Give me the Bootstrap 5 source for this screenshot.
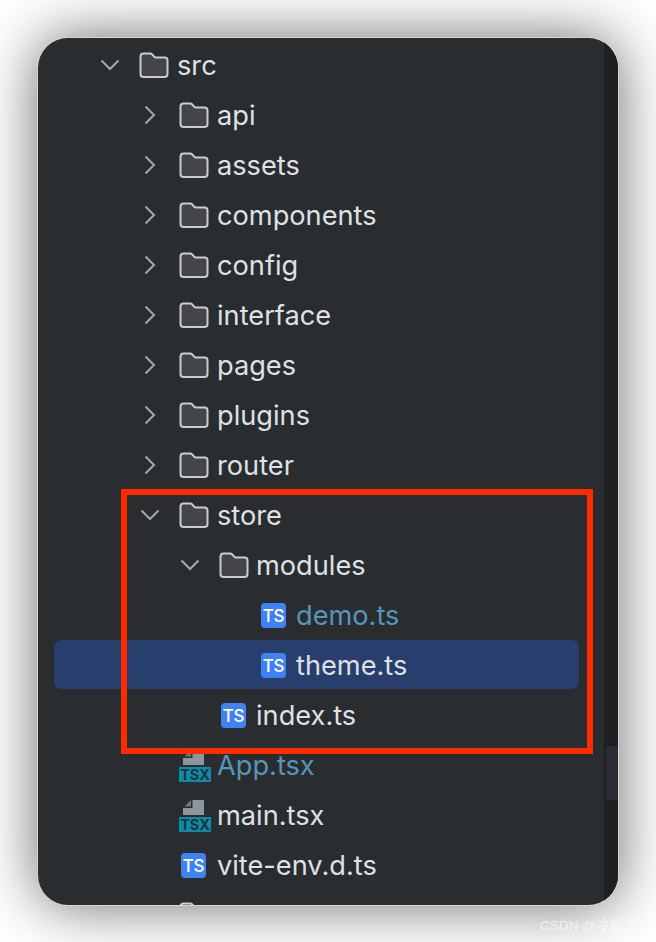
<!DOCTYPE html>
<html lang="en">
<head>
    <meta charset="UTF-8">
    <title>Project tree</title>
    <link href="https://cdn.jsdelivr.net/npm/bootstrap@5.3.2/dist/css/bootstrap.min.css" rel="stylesheet">
    <style>
        body {
            background: #fff;
            margin: 0;
            height: 942px;
            overflow: hidden;
            padding: 38px 38px 0;
            font-family: Inter, "Liberation Sans", sans-serif;
        }
        .ide-window {
            width: 580px;
            height: 867px;
            background: #2a2d30;
            border-radius: 30px;
            box-shadow: 0 0 0 1px #d4d4d4, 0 0 60px rgba(0, 0, 0, .6);
            overflow: hidden;
        }
        .tree-pane { padding-top: 2px; }
        .scroll-strip { width: 14px; background: #1e1f22; padding-top: 708px; }
        .scroll-thumb { height: 54px; margin-left: 2px; background: #2a2c34; }
        .tree-row {
            height: 50px;
            font-size: 27.2px;
            color: #dfe1e5;
            white-space: nowrap;
        }
        .tree-row > span { padding-top: 2px; }
        .tree-row.picked { position: relative; z-index: 0; }
        .tree-row.picked::before {
            content: "";
            position: absolute;
            z-index: -1;
            left: 16px;
            width: 525px;
            top: 0;
            height: 49px;
            background: #283f6e;
            border-radius: 8px;
        }
        .lv0 { padding-left: 61px; }
        .lv1 { padding-left: 101px; }
        .lv2 { padding-left: 141px; }
        .lv3 { padding-left: 181px; }
        .lv2 > span, .lv3 > span { margin-left: -1px; }
        .arrow-slot { width: 40px; flex: none; }
        .arrow-slot svg { display: block; width: 22px; height: 22px; }
        .icon-slot { width: 38px; flex: none; }
        .icon-slot svg { display: block; }
        .ts-icon {
            width: 25px;
            height: 25px;
            margin-left: 2px;
            background: #3f82f5;
            border-radius: 4px;
            color: #fff;
            font-size: 17px;
            font-weight: 500;
            line-height: 27px;
            text-align: center;
            letter-spacing: -.2px;
        }
        .tsx-icon { width: 32px; margin-top: 2px; }
        .tsx-icon svg { display: block; margin: 0 0 2px 4px; }
        .tsx-bar {
            height: 15px;
            background: #0e8ba6;
            color: #1d3540;
            font-size: 14.5px;
            font-weight: 700;
            line-height: 15px;
            text-align: center;
        }
        .changed { color: #5596bb; }
        .red-frame {
            position: absolute;
            left: 121px;
            top: 489px;
            width: 472px;
            height: 265px;
            border: 6px solid #ff2a00;
            z-index: 5;
        }
        .wm-text {
            position: absolute;
            left: 540px;
            top: 916px;
            font-family: "Liberation Sans", "Noto Sans CJK SC", sans-serif;
            font-size: 13.5px;
            color: rgba(255, 255, 255, .6);
            white-space: nowrap;
        }
    </style>
</head>
<body>
    <svg width="0" height="0" class="position-absolute">
        <symbol id="folder" viewBox="0 0 30 26">
            <path d="M4.500 1.500h6.600c1 0 1.700.4 2.300 1.100l1.700 2.100c.4.5.9.7 1.500.7h8.900c1.900 0 3 1.100 3 3v13.600c0 1.900-1.100 3-3 3H4.500c-1.900 0-3-1.100-3-3V4.500c0-1.900 1.100-3 3-3z" fill="#43454a" stroke="#c9ccd1" stroke-width="2"/>
        </symbol>
        <symbol id="right" viewBox="0 0 22 22">
            <path d="M6.500 2.500 15 11l-8.500 8.500" fill="none" stroke="#a3a6ab" stroke-width="2"/>
        </symbol>
        <symbol id="down" viewBox="0 0 22 22">
            <path d="M2.500 6.500 11 15l8.500-8.500" fill="none" stroke="#a3a6ab" stroke-width="2"/>
        </symbol>
        <symbol id="tsxdoc" viewBox="0 0 22 15">
            <path d="M9.500 0H21v15H0V8h9.500z" fill="#8d969e"/>
            <path d="M1.500 6.500 8 0v6.500z" fill="#6f777e"/>
        </symbol>
    </svg>

    <div class="ide-window d-flex">
        <div class="tree-pane flex-grow-1">
            <div class="tree-row lv0 d-flex align-items-center">
                <div class="arrow-slot"><svg><use href="#down"/></svg></div>
                <div class="icon-slot"><svg width="30" height="26"><use href="#folder"/></svg></div>
                <span>src</span>
            </div>
            <div class="tree-row lv1 d-flex align-items-center">
                <div class="arrow-slot"><svg><use href="#right"/></svg></div>
                <div class="icon-slot"><svg width="30" height="26"><use href="#folder"/></svg></div>
                <span>api</span>
            </div>
            <div class="tree-row lv1 d-flex align-items-center">
                <div class="arrow-slot"><svg><use href="#right"/></svg></div>
                <div class="icon-slot"><svg width="30" height="26"><use href="#folder"/></svg></div>
                <span>assets</span>
            </div>
            <div class="tree-row lv1 d-flex align-items-center">
                <div class="arrow-slot"><svg><use href="#right"/></svg></div>
                <div class="icon-slot"><svg width="30" height="26"><use href="#folder"/></svg></div>
                <span>components</span>
            </div>
            <div class="tree-row lv1 d-flex align-items-center">
                <div class="arrow-slot"><svg><use href="#right"/></svg></div>
                <div class="icon-slot"><svg width="30" height="26"><use href="#folder"/></svg></div>
                <span>config</span>
            </div>
            <div class="tree-row lv1 d-flex align-items-center">
                <div class="arrow-slot"><svg><use href="#right"/></svg></div>
                <div class="icon-slot"><svg width="30" height="26"><use href="#folder"/></svg></div>
                <span>interface</span>
            </div>
            <div class="tree-row lv1 d-flex align-items-center">
                <div class="arrow-slot"><svg><use href="#right"/></svg></div>
                <div class="icon-slot"><svg width="30" height="26"><use href="#folder"/></svg></div>
                <span>pages</span>
            </div>
            <div class="tree-row lv1 d-flex align-items-center">
                <div class="arrow-slot"><svg><use href="#right"/></svg></div>
                <div class="icon-slot"><svg width="30" height="26"><use href="#folder"/></svg></div>
                <span>plugins</span>
            </div>
            <div class="tree-row lv1 d-flex align-items-center">
                <div class="arrow-slot"><svg><use href="#right"/></svg></div>
                <div class="icon-slot"><svg width="30" height="26"><use href="#folder"/></svg></div>
                <span>router</span>
            </div>
            <div class="tree-row lv1 d-flex align-items-center">
                <div class="arrow-slot"><svg><use href="#down"/></svg></div>
                <div class="icon-slot"><svg width="30" height="26"><use href="#folder"/></svg></div>
                <span>store</span>
            </div>
            <div class="tree-row lv2 d-flex align-items-center">
                <div class="arrow-slot"><svg><use href="#down"/></svg></div>
                <div class="icon-slot"><svg width="30" height="26"><use href="#folder"/></svg></div>
                <span>modules</span>
            </div>
            <div class="tree-row lv3 d-flex align-items-center">
                <div class="arrow-slot"></div>
                <div class="icon-slot"><div class="ts-icon">TS</div></div>
                <span class="changed">demo.ts</span>
            </div>
            <div class="tree-row picked lv3 d-flex align-items-center">
                <div class="arrow-slot"></div>
                <div class="icon-slot"><div class="ts-icon">TS</div></div>
                <span>theme.ts</span>
            </div>
            <div class="tree-row lv2 d-flex align-items-center">
                <div class="arrow-slot"></div>
                <div class="icon-slot"><div class="ts-icon">TS</div></div>
                <span>index.ts</span>
            </div>
            <div class="tree-row lv1 d-flex align-items-center">
                <div class="arrow-slot"></div>
                <div class="icon-slot"><div class="tsx-icon"><svg width="22" height="15"><use href="#tsxdoc"/></svg><div class="tsx-bar">TSX</div></div></div>
                <span class="changed">App.tsx</span>
            </div>
            <div class="tree-row lv1 d-flex align-items-center">
                <div class="arrow-slot"></div>
                <div class="icon-slot"><div class="tsx-icon"><svg width="22" height="15"><use href="#tsxdoc"/></svg><div class="tsx-bar">TSX</div></div></div>
                <span>main.tsx</span>
            </div>
            <div class="tree-row lv1 d-flex align-items-center">
                <div class="arrow-slot"></div>
                <div class="icon-slot"><div class="ts-icon">TS</div></div>
                <span>vite-env.d.ts</span>
            </div>
            <div class="tree-row lv1 d-flex align-items-center">
                <div class="arrow-slot"></div>
                <div class="icon-slot"><svg width="30" height="26"><use href="#folder"/></svg></div>
            </div>
        </div>
        <div class="scroll-strip flex-shrink-0"><div class="scroll-thumb"></div></div>
    </div>

    <div class="red-frame"></div>
    <div class="wm-text">CSDN @冷脚丫</div>

    <script src="https://cdn.jsdelivr.net/npm/bootstrap@5.3.2/dist/js/bootstrap.bundle.min.js"></script>
</body>
</html>
